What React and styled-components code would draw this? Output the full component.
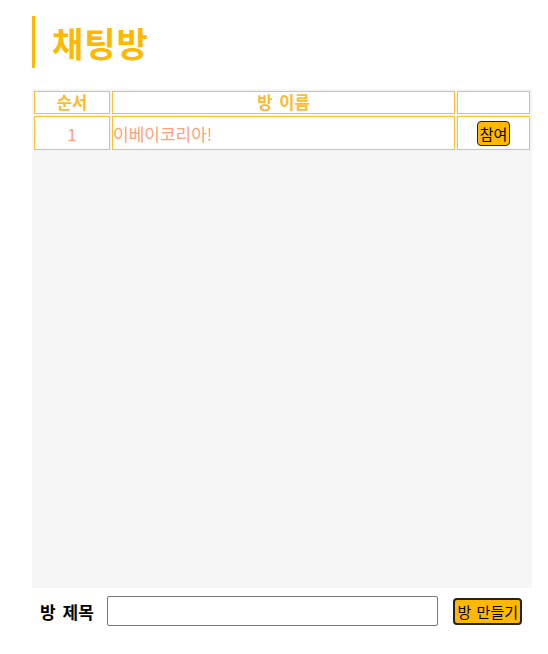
import styled, { createGlobalStyle } from 'styled-components'

const GlobalStyle = createGlobalStyle`
    body {
        margin: 8px;
        background: #fff;
        font-family: "Noto Sans CJK KR", "Noto Sans", sans-serif;
    }
`

const Page = styled.div`
    width: 500px;
    margin: 8px 0 0 24px;
`

const Title = styled.h1`
    margin: 0 0 21px;
    height: 52px;
    display: flex;
    align-items: center;
    padding-left: 17px;
    border-left: 3px solid #ffb800;
    color: #ffb800;
    font-size: 34px;
    font-weight: 700;
    letter-spacing: 1px;
`

const RoomArea = styled.div`
    background: #f5f5f5;
    height: 499px;
`

const Table = styled.table`
    width: 100%;
    border-spacing: 2px;
`

const Th = styled.th`
    border: 1px solid #ffc02e;
    color: #ffb830;
    font-size: 16.5px;
    font-weight: 700;
    word-spacing: 3px;
    height: 21px;
    padding: 0;
    line-height: 21px;
    background: #fff;
`

const Td = styled.td`
    border: 1px solid #ffc02e;
    background: #fff;
    color: #ffa07a;
    height: 32px;
    padding: 0;
    text-align: ${p => p.$align || 'center'};
    font-size: 17px;
    font-weight: 400;
`

const JoinButton = styled.button`
    font-family: inherit;
    font-size: 15px;
    background: #ffb800;
    color: #000;
    border: 1px solid #222;
    border-radius: 4px;
    padding: 0 2px;
    height: 25px;
    cursor: pointer;
`

const Form = styled.form`
    display: flex;
    align-items: center;
    padding: 8px 10px 0 8px;
`

const Label = styled.label`
    font-size: 17px;
    font-weight: 700;
    color: #000;
    word-spacing: 3px;
    margin-right: 13px;
`

const Input = styled.input`
    flex: 1;
    height: 26px;
    border: 1px solid #767676;
    border-radius: 2px;
    margin-right: 15px;
`

const CreateButton = styled.button`
    font-family: inherit;
    font-size: 15px;
    background: #ffb800;
    color: #000;
    border: 2px solid #222;
    border-radius: 4px;
    padding: 0 2px;
    height: 27px;
    word-spacing: 2px;
    cursor: pointer;
`

const rooms = [{ id: 1, name: '이베이코리아!' }]

function App() {
    return (
        <Page>
            <GlobalStyle />
            <Title>채팅방</Title>
            <RoomArea>
                <Table>
                    <colgroup>
                        <col style={{ width: '76px' }} />
                        <col />
                        <col style={{ width: '73px' }} />
                    </colgroup>
                    <thead>
                        <tr>
                            <Th>순서</Th>
                            <Th>방 이름</Th>
                            <Th></Th>
                        </tr>
                    </thead>
                    <tbody>
                        {rooms.map(room => (
                            <tr key={room.id}>
                                <Td>{room.id}</Td>
                                <Td $align='left'>{room.name}</Td>
                                <Td><JoinButton type='button'>참여</JoinButton></Td>
                            </tr>
                        ))}
                    </tbody>
                </Table>
            </RoomArea>
            <Form onSubmit={e => e.preventDefault()}>
                <Label>방 제목</Label>
                <Input type='text' />
                <CreateButton type='submit'>방 만들기</CreateButton>
            </Form>
        </Page>
    )
}

export default App
